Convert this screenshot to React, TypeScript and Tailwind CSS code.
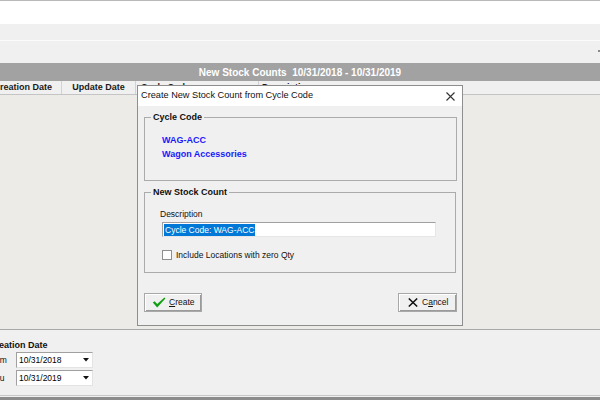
import React from 'react';

const columns = [
  { label: 'Creation Date', className: 'w-[62px] justify-end pr-[9px]' },
  { label: 'Update Date', className: 'w-[74px] justify-center' },
  { label: 'Cycle Code', className: 'w-[123px] justify-start pl-[5px]' },
  { label: 'Description', className: 'flex-1 justify-start pl-[3px]' },
];

function DateBox({ value }: { value: string }) {
  return (
    <div className="ml-[16px] w-[77px] h-[16px] flex items-stretch bg-white border border-t-[#a0a0a0] border-l-[#a0a0a0] border-r-[#e3e3e3] border-b-[#e3e3e3]">
      <div className="flex-1 pl-[2px] text-[8.5px] leading-[14px] text-black">{value}</div>
      <div className="w-[12px] flex items-center justify-center">
        <svg width="6" height="4" viewBox="0 0 6 4">
          <polygon points="0,0 6,0 3,3.5" fill="#111" />
        </svg>
      </div>
    </div>
  );
}

export default function App() {
  return (
    <div className="relative w-[600px] h-[400px] overflow-hidden bg-[#f0f0f0] flex flex-col font-['Liberation_Sans',Arial,sans-serif]">
      {/* toolbar bands */}
      <div className="h-[24px] shrink-0 bg-white border-t border-[#b9b9b9]" />
      <div className="h-[17px] shrink-0 border-b border-[#fbfbfb]" />
      <div className="h-[22px] shrink-0 flex justify-end items-center">
        <div className="w-[2px] h-[2px] bg-[#8a8a8a] mt-[-2px]" />
      </div>

      {/* title bar */}
      <div className="h-[18px] shrink-0 bg-[#a2a2a2] flex items-center justify-center text-white font-bold text-[10px] whitespace-pre">
        New Stock Counts  10/31/2018 - 10/31/2019
      </div>

      {/* column headers */}
      <div className="h-[14px] shrink-0 flex border-b border-[#c4c4c4] bg-[#f0f0f0]">
        {columns.map((c) => (
          <div
            key={c.label}
            className={`${c.className} flex items-center whitespace-nowrap text-[9px] font-bold text-[#1a1a1a] border-r border-[#d2d2d2] last:border-r-0`}
          >
            {c.label}
          </div>
        ))}
      </div>

      {/* grid area */}
      <div className="flex-1 bg-[#ecebe7]" />

      {/* filter panel */}
      <div className="h-[66px] shrink-0 border-t border-[#a8a8a8] pt-[9px]">
        <div className="-ml-[11px] text-[9px] leading-[12px] font-bold text-[#111] whitespace-nowrap">Creation Date</div>
        <div className="mt-[1px] flex flex-col gap-[2px]">
          <div className="flex items-center">
            <div className="-ml-[13px] w-[13px] text-[8.5px] text-[#111] whitespace-nowrap">From</div>
            <DateBox value="10/31/2018" />
          </div>
          <div className="flex items-center">
            <div className="-ml-[13px] w-[13px] text-[8.5px] text-[#111] whitespace-nowrap">Thru</div>
            <DateBox value="10/31/2019" />
          </div>
        </div>
      </div>
      <div className="h-[5px] shrink-0 border-t border-[#c8c8c8] bg-[#f0f0f0] flex flex-col justify-end">
        <div className="h-[3px] bg-[#8c8c8c]" />
      </div>

      {/* dialog */}
      <div className="absolute left-[137px] top-[85px] w-[326px] h-[241px] bg-[#f0f0f0] border border-[#8e8e8e] flex flex-col">
        <div className="h-[20px] shrink-0 bg-white flex items-center justify-between pl-[3px] pr-[7px]">
          <span className="text-[9.2px] text-[#111] whitespace-nowrap">Create New Stock Count from Cycle Code</span>
          <svg width="9" height="9" viewBox="0 0 9 9">
            <path d="M0.5 0.5 L8.5 8.5 M8.5 0.5 L0.5 8.5" stroke="#333" strokeWidth="1.1" />
          </svg>
        </div>

        <div className="flex-1 flex flex-col px-[6px]">
          <fieldset className="mt-[5px] h-[70px] border border-[#ababab] mr-[-1px]">
            <legend className="ml-[6px] px-[2px] text-[9px] leading-[12px] font-bold text-[#111]">Cycle Code</legend>
            <div className="pl-[17px] pt-[11px] text-[9px] leading-[13.5px] font-bold text-[#1818ff]">
              <div>WAG-ACC</div>
              <div>Wagon Accessories</div>
            </div>
          </fieldset>

          <fieldset className="mt-[5px] h-[87px] border border-[#ababab]">
            <legend className="ml-[6px] px-[2px] text-[9px] leading-[12px] font-bold text-[#111]">New Stock Count</legend>
            <div className="pl-[15px] pt-[10px] text-[8.5px] leading-[12px] text-[#111]">Description</div>
            <div className="ml-[17px] mt-[2px] w-[274px] h-[15px] bg-white border border-t-[#a0a0a0] border-l-[#a0a0a0] border-r-[#e6e6e6] border-b-[#e6e6e6] flex items-center pl-[1px]">
              <span className="bg-[#0078d7] text-white text-[8.5px] leading-[12px] px-[1px] whitespace-nowrap">Cycle Code: WAG-ACC</span>
            </div>
            <div className="ml-[17px] mt-[13px] flex items-center gap-[4px]">
              <div className="w-[10px] h-[10px] bg-white border border-[#8f8f8f]" />
              <span className="text-[8.5px] leading-[10px] text-[#111] whitespace-nowrap">Include Locations with zero Qty</span>
            </div>
          </fieldset>

          <div className="mt-[20px] flex justify-between">
            <button className="w-[58px] h-[19px] bg-[#f0f0f0] border border-[#a8a8a8] shadow-[inset_1px_1px_0_#ffffff,inset_-1px_-1px_0_#9a9a9a] flex items-center pl-[7px] gap-[3px]">
              <svg width="14" height="11" viewBox="0 0 14 11">
                <path d="M0.8 5.6 L2.6 4.2 L5.2 7 L12.4 0.4 L13.4 1.6 L5.2 10.4 Z" fill="#12a012" />
              </svg>
              <span className="text-[8.5px] text-[#111]"><span className="underline">C</span>reate</span>
            </button>
            <button className="w-[59px] h-[19px] bg-[#f0f0f0] border border-[#a8a8a8] shadow-[inset_1px_1px_0_#ffffff,inset_-1px_-1px_0_#9a9a9a] flex items-center pl-[9px] gap-[4px] mr-[-1px]">
              <svg width="10" height="9" viewBox="0 0 10 9">
                <path d="M0.8 0.5 L9.2 8.5 M9.2 0.5 L0.8 8.5" stroke="#111" strokeWidth="1.5" />
              </svg>
              <span className="text-[8.5px] text-[#111]">C<span className="underline">a</span>ncel</span>
            </button>
          </div>
        </div>
      </div>
    </div>
  );
}
